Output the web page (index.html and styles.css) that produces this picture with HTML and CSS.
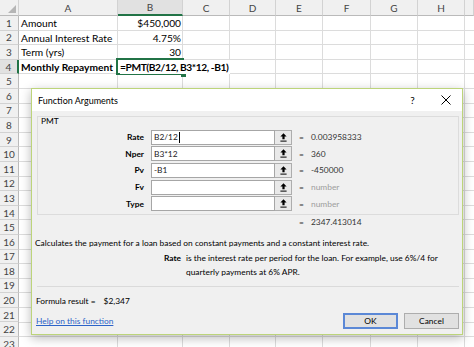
FILE: index.html
```html
<!DOCTYPE html>
<html>
  <head>
    <meta charset="utf-8">
    <title>PMT - Function Arguments</title>
    <link rel="stylesheet" href="styles.css">
  </head>
  <body>

    <div class="sheet">
      <div class="ch corner"><svg width="8" height="8" viewBox="0 0 8 8"><path d="M8 0V8H0Z" fill="#b5b5b5"/></svg></div>
      <div class="ch">A</div>
      <div class="ch ch-sel">B</div>
      <div class="ch">C</div>
      <div class="ch">D</div>
      <div class="ch">E</div>
      <div class="ch">F</div>
      <div class="ch">G</div>
      <div class="ch">H</div>
      <div class="ch"></div>

      <div class="rh">1</div><div class="c">Amount</div><div class="c num">$450,000</div><div></div><div></div><div></div><div></div><div></div><div></div><div></div>
      <div class="rh">2</div><div class="c">Annual Interest Rate</div><div class="c num">4.75%</div><div></div><div></div><div></div><div></div><div></div><div></div><div></div>
      <div class="rh">3</div><div class="c">Term (yrs)</div><div class="c num">30</div><div></div><div></div><div></div><div></div><div></div><div></div><div></div>
      <div class="rh rh-sel">4</div><div class="c bold">Monthly Repayment</div><div class="c bold sel"><span class="editor">=PMT(B2/12, B3*12, -B1)</span><span class="handle"></span></div><div></div><div></div><div></div><div></div><div></div><div></div><div></div>
      <div class="rh">5</div>
      <div class="rh">6</div>
      <div class="rh">7</div>
      <div class="rh">8</div>
      <div class="rh">9</div>
      <div class="rh">10</div>
      <div class="rh">11</div>
      <div class="rh">12</div>
      <div class="rh">13</div>
      <div class="rh">14</div>
      <div class="rh">15</div>
      <div class="rh">16</div>
      <div class="rh">17</div>
      <div class="rh">18</div>
      <div class="rh">19</div>
      <div class="rh">20</div>
      <div class="rh">21</div>
      <div class="rh">22</div>
      <div class="rh">23</div>
    </div>

    <div class="dialog">
      <div class="titlebar">
        <span class="title">Function Arguments</span>
        <span class="tb-btn">?</span>
        <span class="tb-btn"><svg width="10" height="10" viewBox="0 0 10 10"><path d="M0.5 0.5L9.5 9.5M9.5 0.5L0.5 9.5" stroke="#000" stroke-width="1"/></svg></span>
      </div>

      <div class="dbody">
        <div class="group">
          <div class="legend">PMT</div>
          <div class="fields">
            <div class="lbl">Rate</div><div class="inp">B2/12<span class="caret"></span></div><div class="pick"><svg width="7" height="9" viewBox="0 0 7 9"><path d="M3.5 0.3L6.6 3.6H4.6V6.2H2.4V3.6H0.4Z" fill="#000"/><rect x="0.4" y="7.6" width="6.2" height="1" fill="#000"/></svg></div><div class="eq">=</div><div class="val">0.003958333</div>
            <div class="lbl">Nper</div><div class="inp">B3*12</div><div class="pick"><svg width="7" height="9" viewBox="0 0 7 9"><path d="M3.5 0.3L6.6 3.6H4.6V6.2H2.4V3.6H0.4Z" fill="#000"/><rect x="0.4" y="7.6" width="6.2" height="1" fill="#000"/></svg></div><div class="eq">=</div><div class="val">360</div>
            <div class="lbl">Pv</div><div class="inp">-B1</div><div class="pick"><svg width="7" height="9" viewBox="0 0 7 9"><path d="M3.5 0.3L6.6 3.6H4.6V6.2H2.4V3.6H0.4Z" fill="#000"/><rect x="0.4" y="7.6" width="6.2" height="1" fill="#000"/></svg></div><div class="eq">=</div><div class="val">-450000</div>
            <div class="lbl">Fv</div><div class="inp"></div><div class="pick"><svg width="7" height="9" viewBox="0 0 7 9"><path d="M3.5 0.3L6.6 3.6H4.6V6.2H2.4V3.6H0.4Z" fill="#000"/><rect x="0.4" y="7.6" width="6.2" height="1" fill="#000"/></svg></div><div class="eq">=</div><div class="val dim">number</div>
            <div class="lbl">Type</div><div class="inp"></div><div class="pick"><svg width="7" height="9" viewBox="0 0 7 9"><path d="M3.5 0.3L6.6 3.6H4.6V6.2H2.4V3.6H0.4Z" fill="#000"/><rect x="0.4" y="7.6" width="6.2" height="1" fill="#000"/></svg></div><div class="eq">=</div><div class="val dim">number</div>
          </div>
        </div>

        <div class="result"><span class="eq">=</span><span class="val">2347.413014</span></div>

        <div class="summary">Calculates the payment for a loan based on constant payments and a constant interest rate.</div>

        <div class="argdesc">
          <div class="argname">Rate</div>
          <div class="argtext">is the interest rate per period for the loan. For example, use 6%/4 for<br>quarterly payments at 6% APR.</div>
        </div>

        <div class="sep"></div>

        <div class="formula">Formula result =<span class="fval">$2,347</span></div>

        <div class="footer">
          <a class="helplink" href="#">Help on this function</a>
          <div class="buttons">
            <div class="btn btn-default">OK</div>
            <div class="btn">Cancel</div>
          </div>
        </div>
      </div>
    </div>

  </body>
</html>
```

FILE: styles.css
```css
body          { margin: 0; width: 474px; height: 347px; overflow: hidden; position: relative; background: #fff; font-family: Lato, "Liberation Sans", sans-serif; }

/* spreadsheet */

.sheet        { display: grid; height: 347px; overflow: hidden;
                grid-template-columns: 19px 99px 65px 47px 46px 47px 48px 47px 47px 1fr;
                grid-template-rows: 16px; grid-auto-rows: 14.6px;
                font-size: 10.2px; color: #000;
                background:
                  linear-gradient(#dcdcdc, #dcdcdc) 117px 0 / 1px 100% no-repeat,
                  linear-gradient(#dcdcdc, #dcdcdc) 182px 0 / 1px 100% no-repeat,
                  linear-gradient(#dcdcdc, #dcdcdc) 229px 0 / 1px 100% no-repeat,
                  linear-gradient(#dcdcdc, #dcdcdc) 275px 0 / 1px 100% no-repeat,
                  linear-gradient(#dcdcdc, #dcdcdc) 322px 0 / 1px 100% no-repeat,
                  linear-gradient(#dcdcdc, #dcdcdc) 370px 0 / 1px 100% no-repeat,
                  linear-gradient(#dcdcdc, #dcdcdc) 417px 0 / 1px 100% no-repeat,
                  linear-gradient(#dcdcdc, #dcdcdc) 464px 0 / 1px 100% no-repeat,
                  repeating-linear-gradient(to bottom, transparent 0 13.6px, #dcdcdc 13.6px 14.6px) 0 16px,
                  #fff; }

.ch           { background: #f0f0f0; border-right: 1px solid #d2d2d2; border-bottom: 1px solid #bababa; color: #444; font-size: 10px;
                display: flex; align-items: center; justify-content: center; }
.ch.corner    { align-items: flex-end; justify-content: flex-end; padding: 0 2px 2px 0; }
.ch-sel       { background: #e1e1e1; border-bottom: 2px solid #217346; }

.rh           { grid-column: 1; background: #f0f0f0; border-right: 1px solid #bababa; border-bottom: 1px solid #d2d2d2; color: #444; font-size: 10px;
                display: flex; align-items: center; justify-content: center; }
.rh-sel       { background: #e1e1e1; border-right: 2px solid #217346; }

.c            { display: flex; align-items: center; padding: 0 2px; white-space: nowrap; }
.c.num        { justify-content: flex-end; }
.bold         { font-weight: bold; }

.sel          { position: relative; overflow: visible; }
.sel::after   { content: ""; position: absolute; left: -2px; top: -2px; right: -1px; bottom: -1px; border: 2px solid #217346; }
.editor       { position: relative; z-index: 1; align-self: stretch; display: flex; align-items: center; background: #fff; padding-right: 2px; letter-spacing: -0.4px; }
.handle       { position: absolute; right: -3px; bottom: -3px; width: 5px; height: 3px; background: #217346; z-index: 2; }

/* dialog */

.dialog       { position: absolute; left: 31px; top: 88px; width: 432px; height: 247px; box-sizing: border-box;
                border: 1px solid #bcd47a; background: #f0f0f0; box-shadow: 0 3px 10px rgba(0, 0, 0, 0.28);
                display: flex; flex-direction: column; font-size: 8.4px; color: #000; }

.titlebar     { height: 22px; flex: none; background: #fff; display: flex; align-items: center; padding-left: 6px; }
.title        { flex: 1; font-size: 9px; }
.tb-btn       { width: 33px; display: flex; justify-content: center; font-size: 10px; }

.dbody        { flex: 1; padding: 5px 3px 0 3px; display: flex; flex-direction: column; }

.group        { height: 99px; box-sizing: border-box; margin-left: 2px; border: 1px solid #dcdcdc; }
.legend       { line-height: 9px; padding-left: 3px; }
.fields       { display: grid; grid-template-columns: 113px 124px 17px 19px auto; grid-auto-rows: 15px; row-gap: 1.7px; margin-top: 3.5px; }
.lbl          { font-weight: bold; text-align: right; padding-right: 7px; display: flex; align-items: center; justify-content: flex-end; }
.inp          { border: 1px solid #a6a6a6; background: #fff; padding-left: 2px; display: flex; align-items: center; color: #222; }
.caret        { width: 1px; height: 11px; background: #000; margin-left: 1px; }
.pick         { border: 1px solid #adadad; border-left: 0; background: #e9e9e9; display: flex; align-items: center; justify-content: center; }
.eq           { display: flex; align-items: center; justify-content: center; color: #333; }
.val          { display: flex; align-items: center; color: #333; }
.val.dim      { color: #9d9d9d; }

.result       { display: flex; line-height: 12px; margin-top: 1px; padding-left: 257px; }
.result .eq   { width: 19px; }

.summary      { line-height: 12px; margin-top: 9px; }

.argdesc      { display: flex; line-height: 14px; margin-top: 2px; }
.argname      { width: 146px; text-align: right; font-weight: bold; flex: none; }
.argtext      { margin-left: 5px; }

.sep          { height: 1px; background: #dadada; margin: 7px 0 0 2px; }

.formula      { line-height: 12px; margin: 8px 0 0 1px; }
.fval         { margin-left: 8px; }

.footer       { display: flex; align-items: center; justify-content: space-between; margin-top: 6px; padding-left: 1px; }
.helplink     { color: #2c63c8; text-decoration: underline; }
.buttons      { display: flex; gap: 6px; }
.btn          { width: 55px; height: 16px; box-sizing: border-box; border: 1px solid #adadad; background: #e1e1e1;
                display: flex; align-items: center; justify-content: center; }
.btn-default  { border: 2px solid #5b88d6; }
```
